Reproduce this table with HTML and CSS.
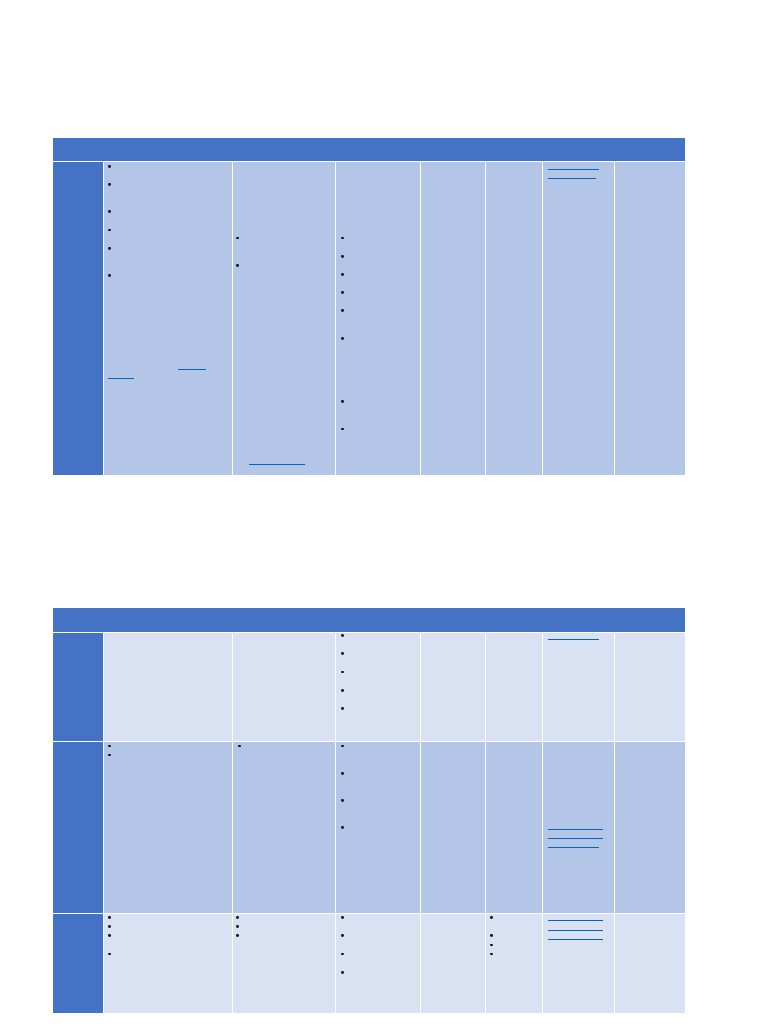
FILE: index.html
```html
<!DOCTYPE html>
<html lang="en">
<head>
<meta charset="utf-8">
<title>Tables</title>
<link rel="stylesheet" href="styles.css">
</head>
<body>
<main class="page">
  <section class="tbl t1">
    <div class="hd"></div>
    <div class="row lt">
      <div class="cell side"></div>
      <div class="cell">
        <ul class="items">
          <li class="dot"></li>
          <li class="dot s1"></li>
          <li class="dot s2"></li>
          <li class="dot s1"></li>
          <li class="dot s1"></li>
          <li class="dot s2"></li>
          <li class="lnk s9 w28 mB"></li>
          <li class="lnk w26 mA"></li>
        </ul>
      </div>
      <div class="cell">
        <ul class="items tight up">
          <li class="dot s8"></li>
          <li class="dot s2"></li>
          <li class="lnk s20h w56 mC"></li>
        </ul>
      </div>
      <div class="cell">
        <ul class="items up">
          <li class="dot s8"></li>
          <li class="dot s1"></li>
          <li class="dot s1"></li>
          <li class="dot s1"></li>
          <li class="dot s1"></li>
          <li class="dot s2"></li>
          <li class="dot s6"></li>
          <li class="dot s2"></li>
        </ul>
      </div>
      <div class="cell"></div>
      <div class="cell"></div>
      <div class="cell">
        <ul class="items links">
          <li class="lnk w51"></li>
          <li class="lnk w48"></li>
        </ul>
      </div>
      <div class="cell"></div>
    </div>
  </section>

  <section class="tbl t2">
    <div class="hd"></div>
    <div class="row alt">
      <div class="cell side"></div>
      <div class="cell"></div>
      <div class="cell"></div>
      <div class="cell">
        <ul class="items up">
          <li class="dot"></li>
          <li class="dot s1"></li>
          <li class="dot s1"></li>
          <li class="dot s1"></li>
          <li class="dot s1"></li>
        </ul>
      </div>
      <div class="cell"></div>
      <div class="cell"></div>
      <div class="cell">
        <ul class="items links">
          <li class="lnk w51"></li>
        </ul>
      </div>
      <div class="cell"></div>
    </div>
    <div class="row lt">
      <div class="cell side"></div>
      <div class="cell">
        <ul class="items">
          <li class="dot"></li>
          <li class="dot"></li>
        </ul>
      </div>
      <div class="cell">
        <ul class="items">
          <li class="dot"></li>
        </ul>
      </div>
      <div class="cell">
        <ul class="items">
          <li class="dot"></li>
          <li class="dot s2"></li>
          <li class="dot s2"></li>
          <li class="dot s2"></li>
        </ul>
      </div>
      <div class="cell"></div>
      <div class="cell"></div>
      <div class="cell">
        <ul class="items links up2">
          <li class="lnk s9 w56"></li>
          <li class="lnk w56"></li>
          <li class="lnk w51"></li>
        </ul>
      </div>
      <div class="cell"></div>
    </div>
    <div class="row alt">
      <div class="cell side"></div>
      <div class="cell">
        <ul class="items">
          <li class="dot"></li>
          <li class="dot"></li>
          <li class="dot"></li>
          <li class="dot s1"></li>
        </ul>
      </div>
      <div class="cell">
        <ul class="items tight">
          <li class="dot"></li>
          <li class="dot"></li>
          <li class="dot"></li>
        </ul>
      </div>
      <div class="cell">
        <ul class="items">
          <li class="dot"></li>
          <li class="dot s1"></li>
          <li class="dot s1"></li>
          <li class="dot s1"></li>
        </ul>
      </div>
      <div class="cell"></div>
      <div class="cell">
        <ul class="items mid">
          <li class="dot"></li>
          <li class="dot s1"></li>
          <li class="dot"></li>
          <li class="dot"></li>
        </ul>
      </div>
      <div class="cell">
        <ul class="items links">
          <li class="lnk w56"></li>
          <li class="lnk w56"></li>
          <li class="lnk w56"></li>
        </ul>
      </div>
      <div class="cell"></div>
    </div>
  </section>
</main>
</body>
</html>
```

FILE: styles.css
```css
html, body {
  margin: 0;
  padding: 0;
  background: #ffffff;
  font-family: "Liberation Sans", Arial, sans-serif;
}

.page {
  padding-top: 138.3px;
  padding-left: 52.7px;
}

.tbl {
  display: grid;
  grid-template-columns: 50px 128.5px 102px 83.7px 64px 56.3px 71px 69.7px;
  gap: 1px;
  width: 632.2px;
}

.t1 {
  grid-template-rows: 23px 312.7px;
}

.t2 {
  margin-top: 133.3px;
  grid-template-rows: 23.4px 108.3px 170.7px 99px;
}

.hd {
  grid-column: 1 / -1;
  background: #4472c4;
}

.row {
  display: contents;
}

.cell {
  overflow: hidden;
}

.lt > .cell {
  background: #b4c6e7;
}

.alt > .cell {
  background: #d9e2f3;
}

.row > .cell.side {
  background: #4472c4;
}

/* invisible text lines: each item occupies one 9.1px document line */
.items {
  list-style: none;
  margin: 0;
  padding: 0 0 0 4.8px;
}

.items.tight {
  padding-left: 2.6px;
}

.items.mid {
  padding-left: 3.9px;
}

.items.links {
  padding-left: 4.4px;
}

.items.up {
  margin-top: -1px;
}

.items.up2 {
  margin-top: -1.8px;
}

.items li {
  display: flow-root;
  height: 9.1px;
}

.dot::before {
  content: "";
  display: block;
  width: 2.8px;
  height: 2.8px;
  margin-top: 2.6px;
  border-radius: 50%;
  background: #111111;
}

.lnk::before {
  content: "";
  display: block;
  height: 1px;
  margin-top: 6.8px;
  background: #0563c1;
}

.w26 { width: 26.3px; }
.w28 { width: 28px; }
.w48 { width: 48px; }
.w51 { width: 51.3px; }
.w56 { width: 55.6px; }

.mA { margin-left: -0.7px; }
.mB { margin-left: 69.3px; }
.mC { margin-left: 13.3px; }

.s1 { margin-top: 9.1px; }
.s2 { margin-top: 18.2px; }
.s6 { margin-top: 54.6px; }
.s8 { margin-top: 72.8px; }
.s9 { margin-top: 81.9px; }
.s20h { margin-top: 186.5px; }
```
